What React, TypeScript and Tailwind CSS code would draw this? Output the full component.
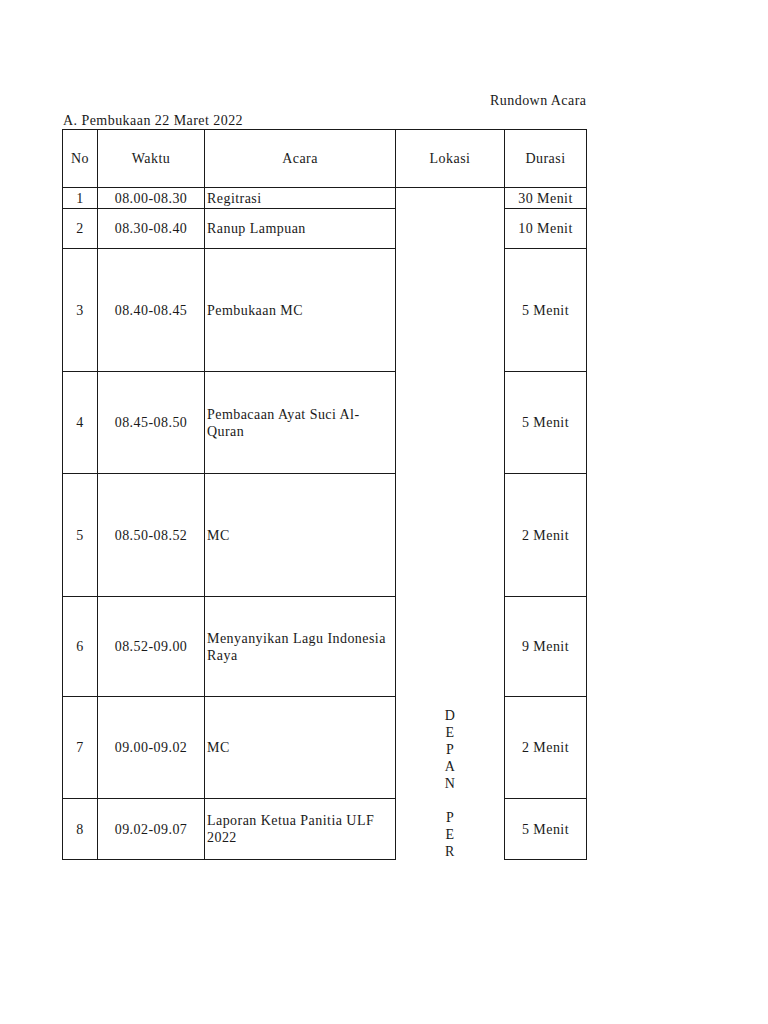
const rows = [
  { no: "1", waktu: "08.00-08.30", acara: ["Regitrasi"], durasi: "30 Menit", h: "h-[21px]" },
  { no: "2", waktu: "08.30-08.40", acara: ["Ranup Lampuan"], durasi: "10 Menit", h: "h-[40px]" },
  { no: "3", waktu: "08.40-08.45", acara: ["Pembukaan MC"], durasi: "5 Menit", h: "h-[123px]" },
  { no: "4", waktu: "08.45-08.50", acara: ["Pembacaan Ayat Suci Al-", "Quran"], durasi: "5 Menit", h: "h-[102px]" },
  { no: "5", waktu: "08.50-08.52", acara: ["MC"], durasi: "2 Menit", h: "h-[123px]" },
  { no: "6", waktu: "08.52-09.00", acara: ["Menyanyikan Lagu Indonesia", "Raya"], durasi: "9 Menit", h: "h-[100px]" },
  { no: "7", waktu: "09.00-09.02", acara: ["MC"], durasi: "2 Menit", h: "h-[102px]" },
  { no: "8", waktu: "09.02-09.07", acara: ["Laporan Ketua Panitia ULF", "2022"], durasi: "5 Menit", h: "h-[61px]" },
];

// only the part of the vertical label that shows on this page
const lokasi = "DEPAN PER".split("");

const cell = "border border-[#1a1a1a] p-0 align-middle";

export default function App() {
  return (
    <div
      className="min-h-screen bg-white text-[14px] text-[#1a1a1a] tracking-[0.45px]"
      style={{ fontFamily: '"Liberation Serif", "Times New Roman", serif' }}
    >
      <div className="w-[588px] overflow-hidden pt-[91px]">
        <div className="h-[20px] whitespace-nowrap pl-[490px] leading-[20px]">Rundown Acara</div>
        <div className="h-[18px] whitespace-nowrap pl-[63px] leading-[20px]">A. Pembukaan 22 Maret 2022</div>
        <table className="ml-[62px] w-[524px] table-fixed border-collapse">
          <colgroup>
            <col className="w-[35px]" />
            <col className="w-[107px]" />
            <col className="w-[191px]" />
            <col className="w-[109px]" />
            <col className="w-[82px]" />
          </colgroup>
          <thead>
            <tr className="h-[58px]">
              <td className={`${cell} text-center`}>No</td>
              <td className={`${cell} text-center`}>Waktu</td>
              <td className={`${cell} text-center`}>Acara</td>
              <td className={`${cell} text-center`}>Lokasi</td>
              <td className={`${cell} text-center`}>Durasi</td>
            </tr>
          </thead>
          <tbody>
            {rows.map((r, i) => (
              <tr key={r.no} className={r.h}>
                <td className={`${cell} text-center leading-[17px]`}>{r.no}</td>
                <td className={`${cell} text-center leading-[17px]`}>{r.waktu}</td>
                <td className={`${cell} whitespace-nowrap pl-[2px] text-left leading-[17px]`}>
                  {r.acara.map((line) => (
                    <div key={line}>{line}</div>
                  ))}
                </td>
                {i === 0 && (
                  <td rowSpan={8} className={`${cell} border-b-0 align-top`}>
                    <div className="flex h-[671px] flex-col items-center pt-[519px] leading-[17px]">
                      {lokasi.map((ch, k) => (
                        <div key={k} className="h-[17px]">
                          {ch === " " ? "\u00a0" : ch}
                        </div>
                      ))}
                    </div>
                  </td>
                )}
                <td className={`${cell} whitespace-nowrap text-center leading-[17px]`}>{r.durasi}</td>
              </tr>
            ))}
          </tbody>
        </table>
      </div>
    </div>
  );
}
